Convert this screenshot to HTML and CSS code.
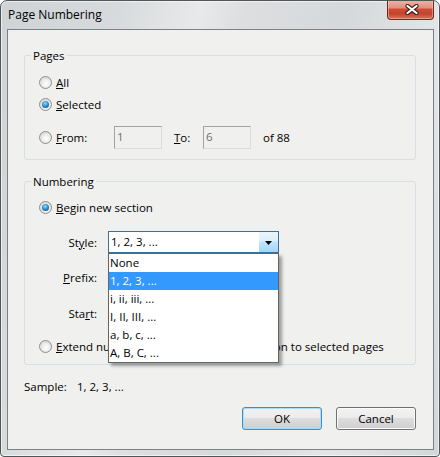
FILE: index.html
```html
<!DOCTYPE html>
<html>
<head>
<meta charset="utf-8">
<title>Page Numbering</title>
<link rel="stylesheet" href="styles.css">
</head>
<body>
<div class="window">
  <div class="titlebar">
    <span class="title">Page Numbering</span>
    <div class="close">
      <svg width="14" height="11" viewBox="0 0 14 11">
        <path d="M2.5 2 L11.5 9 M11.5 2 L2.5 9" stroke="#3a1d18" stroke-width="4.2" stroke-linecap="round" fill="none"/>
        <path d="M2.5 2 L11.5 9 M11.5 2 L2.5 9" stroke="#ffffff" stroke-width="2.2" stroke-linecap="round" fill="none"/>
      </svg>
    </div>
  </div>
  <div class="client">
    <fieldset class="group pages">
      <legend>Pages</legend>
      <div class="group-body">
        <div class="opt"><span class="radio"></span><span><u>A</u>ll</span></div>
        <div class="opt"><span class="radio on"></span><span><u>S</u>elected</span></div>
        <div class="opt from-row">
          <span class="radio"></span>
          <span class="from-lbl"><u>F</u>rom:</span>
          <span class="textbox">1</span>
          <span class="to-lbl"><u>T</u>o:</span>
          <span class="textbox">6</span>
          <span class="of">of 88</span>
        </div>
      </div>
    </fieldset>
    <fieldset class="group numbering">
      <legend>Numbering</legend>
      <div class="group-body">
        <div class="opt"><span class="radio on"></span><span><u>B</u>egin new section</span></div>
        <div class="field style-row">
          <span class="flabel">St<u>y</u>le:</span>
          <div class="combo">
            <span class="combo-text">1, 2, 3, ...</span>
            <span class="combo-btn">
              <svg width="7" height="4" viewBox="0 0 7 4"><polygon points="0,0 7,0 3.5,4" fill="#000"/></svg>
            </span>
            <div class="dropdown">
              <div class="item">None</div>
              <div class="item sel">1, 2, 3, ...</div>
              <div class="item">i, ii, iii, ...</div>
              <div class="item">I, II, III, ...</div>
              <div class="item">a, b, c, ...</div>
              <div class="item">A, B, C, ...</div>
            </div>
          </div>
        </div>
        <div class="field prefix-row">
          <span class="flabel"><u>P</u>refix:</span>
          <span class="entry"></span>
        </div>
        <div class="field start-row">
          <span class="flabel">Sta<u>r</u>t:</span>
          <span class="entry"></span>
        </div>
        <div class="opt extend-row"><span class="radio"></span><span class="nowrap"><u>E</u>xtend numbering used in previous section to selected pages</span></div>
      </div>
    </fieldset>
    <div class="sample"><span class="sample-lbl">Sample:</span><span>1, 2, 3, ...</span></div>
    <div class="buttons">
      <div class="btn default">OK</div>
      <div class="btn">Cancel</div>
    </div>
  </div>
</div>
</body>
</html>
```

FILE: styles.css
```css
html, body {
  margin: 0;
  padding: 0;
  background: #ffffff;
}

.window {
  width: 440px;
  height: 457px;
  box-sizing: border-box;
  border: 1px solid #50555a;
  border-radius: 7px 7px 4px 4px;
  background: linear-gradient(105deg, #cfd3d6 0%, #d8dbdd 22%, #e8e9ea 36%, #dcdee0 44%, #d6d9db 62%, #e3e5e6 80%, #d3d6d8 100%);
  box-shadow: inset 0 0 0 1px rgba(255, 255, 255, 0.6);
  display: flex;
  flex-direction: column;
  overflow: hidden;
  font-family: "Open Sans", "Liberation Sans", sans-serif;
  font-size: 11.5px;
  color: #000;
}

.titlebar {
  height: 28px;
  flex: none;
  display: flex;
  justify-content: space-between;
  align-items: flex-start;
  padding-left: 7px;
}

.title {
  line-height: 28px;
  font-size: 12px;
  color: #000;
}

.close {
  width: 47px;
  height: 20px;
  margin-top: -1px;
  margin-right: 5px;
  box-sizing: border-box;
  border: 1px solid #6a2c23;
  border-top: none;
  border-radius: 0 0 4px 4px;
  background: linear-gradient(#ebb7aa 0%, #e18f7c 42%, #cb4c35 48%, #c6432b 72%, #d9735d 100%);
  box-shadow: inset 0 0 0 1px rgba(255, 210, 200, 0.45);
  display: flex;
  align-items: center;
  justify-content: center;
}

.close svg {
  display: block;
  margin-left: 2px;
}

.client {
  height: 421px;
  flex: none;
  box-sizing: border-box;
  margin: 0 5px 0 6px;
  border: 1px solid #7d8184;
  background: #f0f0ee;
  display: flex;
  flex-direction: column;
}

.group {
  margin: 13px 0 0 16px;
  width: 392px;
  box-sizing: border-box;
  border: 1px solid #d5dfe5;
  border-radius: 3px;
  padding: 0;
  min-width: 0;
}

.pages {
  margin-top: 17px;
}

.group legend {
  padding: 0 2px;
  margin-left: 6px;
  line-height: 17px;
}

.group-body {
  padding: 7px 0 10px 14px;
}

.numbering .group-body {
  padding: 6px 0 7px 14px;
}

.opt {
  display: flex;
  align-items: center;
  height: 22px;
  white-space: nowrap;
}

.radio {
  width: 13px;
  height: 13px;
  box-sizing: border-box;
  flex: none;
  margin-right: 4px;
  border: 1px solid #8d8f90;
  border-radius: 50%;
  background: radial-gradient(circle at 55% 60%, #fdfdfd 0%, #f1f1f1 35%, #d6d6d6 80%, #c4c4c4 100%);
  position: relative;
  display: flex;
  align-items: center;
  justify-content: center;
}

.radio.on::after {
  content: "";
  width: 7px;
  height: 7px;
  border-radius: 50%;
  background: radial-gradient(circle at 45% 35%, #9adcfa 0%, #3a9ad6 40%, #17609a 75%, #0b3f66 100%);
}

.from-row {
  margin-top: 11px;
  height: 23px;
}

.from-lbl {
  width: 58px;
}

.textbox {
  width: 48px;
  height: 23px;
  box-sizing: border-box;
  border: 1px solid;
  border-color: #a2a2a2 #dcdcdc #dcdcdc #a2a2a2;
  padding: 0 2px;
  line-height: 19px;
  color: #6d6d6d;
  background: #f0f0ee;
}

.to-lbl {
  margin-left: 12px;
  width: 29px;
}

.of {
  margin-left: 12px;
}

.field {
  display: flex;
  align-items: center;
  height: 22px;
  margin-top: 13px;
}

.start-row {
  margin-top: 14px;
}

.flabel {
  width: 58px;
  margin-right: 11px;
  text-align: right;
}

.combo {
  position: relative;
  z-index: 2;
  width: 171px;
  height: 22px;
  box-sizing: border-box;
  border: 1px solid #3e6f94;
  background: #ffffff;
  display: flex;
  align-items: stretch;
}

.combo-text {
  flex: 1;
  padding-left: 2px;
  line-height: 20px;
}

.combo-btn {
  width: 19px;
  background: linear-gradient(#eaf6fd 0%, #d9f0fc 45%, #bee6fd 50%, #a4d6f3 100%);
  display: flex;
  align-items: center;
  justify-content: center;
}

.combo-btn svg {
  display: block;
  margin-top: 1px;
}

.dropdown {
  position: absolute;
  left: -1px;
  top: 21px;
  width: 171px;
  box-sizing: border-box;
  border: 1px solid #646464;
  background: #ffffff;
  box-shadow: 3px 3px 3px rgba(0, 0, 0, 0.35);
}

.item {
  height: 18px;
  line-height: 18px;
  padding-left: 1px;
  white-space: nowrap;
}

.item.sel {
  background: #3399ff;
  color: #ffffff;
}

.entry {
  width: 171px;
  height: 22px;
  box-sizing: border-box;
  border: 1px solid #abadb3;
  background: #ffffff;
}

.extend-row {
  margin-top: 11px;
}

.nowrap {
  white-space: nowrap;
}

.sample {
  display: flex;
  align-items: center;
  height: 22px;
  margin: 10px 0 0 16px;
}

.sample-lbl {
  width: 53px;
}

.buttons {
  display: flex;
  justify-content: flex-end;
  gap: 14px;
  margin: 10px 17px 0 0;
}

.btn {
  width: 80px;
  height: 23px;
  box-sizing: border-box;
  border: 1px solid #707070;
  border-radius: 3px;
  background: linear-gradient(#f2f2f2 0%, #ebebeb 50%, #dddddd 50%, #cfcfcf 100%);
  box-shadow: inset 0 0 0 1px #fbfbfb;
  text-align: center;
  line-height: 21px;
}

.btn.default {
  border-color: #3c8fc6;
  box-shadow: inset 0 0 0 1px #a9dcf6;
}
```
